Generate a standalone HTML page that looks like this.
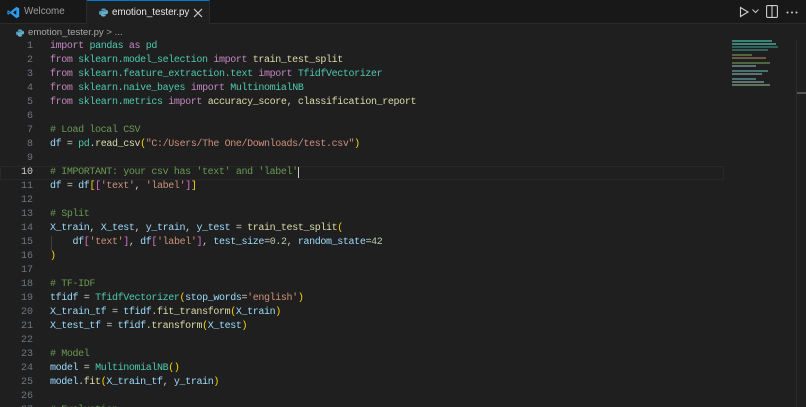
<!DOCTYPE html>
<html><head><meta charset="utf-8"><style>
*{margin:0;padding:0;box-sizing:border-box}
html,body{width:806px;height:407px;overflow:hidden}
body{background:#1f1f1f;font-family:"Liberation Sans",sans-serif;position:relative}
.tabs{position:absolute;left:0;top:0;width:806px;height:24px;background:#181818;border-bottom:1px solid #2b2b2b}
.tab{position:absolute;top:0;height:24px;font-size:9.8px;line-height:24px;color:#9d9d9d}
.t1{left:0;width:87px;padding-left:24px;border-right:1px solid #2b2b2b}
.t2{left:87px;width:123px;background:#1f1f1f;color:#e8e8e8;padding-left:25px;height:25px;border-right:1px solid #2b2b2b;border-top:1px solid #0078d4}
.crumb{position:absolute;left:28px;top:26px;font-size:9.6px;color:#a9a9a9;line-height:14px}
.code{position:absolute;left:0;top:40px;font-family:"Liberation Mono",monospace;font-size:10px;letter-spacing:-0.37px;line-height:14px;white-space:pre}
.ln{position:absolute;left:0;width:33px;text-align:right;color:#6e7681;letter-spacing:0}
.tx{position:absolute;left:50px;color:#cccccc}
.k{color:#c586c0}.m{color:#4ec9b0}.f{color:#dcdcaa}.v{color:#9cdcfe}.s{color:#ce9178}.c{color:#6a9955}.n{color:#b5cea8}.y{color:#ffd700}.p{color:#da70d6}.o{color:#d4d4d4}
.cur{position:absolute;left:0;top:166px;width:724px;height:14px;border:1px solid #282828}
</style></head><body>
<div class="tabs">
<div class="tab t1"><svg style="position:absolute;left:7px;top:6px" width="13" height="13" viewBox="0 0 16 16"><path d="M11.5 1 L15 2.7 V13.3 L11.5 15 L4 8.7 L1.5 10.7 L0.5 10 V6 L1.5 5.3 L4 7.3 Z M11.5 4.8 L7.3 8 L11.5 11.2 Z M1.8 6.7 V9.3 L3.2 8 Z" fill="#2c9ef0"/></svg>Welcome</div>
<div class="tab t2"><svg style="position:absolute;left:12px;top:7px" width="9" height="9" viewBox="0 0 10 10"><path d="M5 0.5 C2.5 0.5 2.6 1.6 2.6 1.6 V2.8 H5.1 V3.2 H1.6 C1.6 3.2 0 3 0 5.4 C0 7.8 1.4 7.7 1.4 7.7 H2.3 V6.6 C2.3 6.6 2.2 5.2 3.7 5.2 H6.2 C6.2 5.2 7.6 5.2 7.6 3.8 V1.7 C7.6 1.7 7.8 0.5 5 0.5Z" fill="#519aba"/><path d="M5 9.5 C7.5 9.5 7.4 8.4 7.4 8.4 V7.2 H4.9 V6.8 H8.4 C8.4 6.8 10 7 10 4.6 C10 2.2 8.6 2.3 8.6 2.3 H7.7 V3.4 C7.7 3.4 7.8 4.8 6.3 4.8 H3.8 C3.8 4.8 2.4 4.8 2.4 6.2 V8.3 C2.4 8.3 2.2 9.5 5 9.5Z" fill="#6cb3d1"/></svg>emotion_tester.py<svg style="position:absolute;left:106px;top:7px" width="10" height="10" viewBox="0 0 10 10"><path d="M1 1 L9 9 M9 1 L1 9" stroke="#ccc" stroke-width="1.2"/></svg></div>
<svg style="position:absolute;left:738px;top:6px" width="12" height="12" viewBox="0 0 12 12"><path d="M2.5 1.5 L10 6 L2.5 10.5 Z" fill="none" stroke="#ccc" stroke-width="1.1"/></svg>
<svg style="position:absolute;left:752px;top:9px" width="7" height="5" viewBox="0 0 7 5"><path d="M0.5 0.5 L3.5 3.5 L6.5 0.5" fill="none" stroke="#ccc" stroke-width="1"/></svg>
<svg style="position:absolute;left:766px;top:5px" width="12" height="13" viewBox="0 0 12 13"><rect x="0.6" y="0.6" width="10.8" height="11.8" rx="1" fill="none" stroke="#ccc" stroke-width="1.1"/><path d="M6 0.6 V12.4" stroke="#ccc" stroke-width="1.1"/></svg>
<svg style="position:absolute;left:786px;top:11px" width="12" height="3" viewBox="0 0 12 3"><circle cx="1.5" cy="1.5" r="1" fill="#ccc"/><circle cx="6" cy="1.5" r="1" fill="#ccc"/><circle cx="10.5" cy="1.5" r="1" fill="#ccc"/></svg>
</div>
<div class="crumb"><svg style="position:absolute;left:-12px;top:3px" width="8" height="8" viewBox="0 0 10 10"><path d="M5 0.5 C2.5 0.5 2.6 1.6 2.6 1.6 V2.8 H5.1 V3.2 H1.6 C1.6 3.2 0 3 0 5.4 C0 7.8 1.4 7.7 1.4 7.7 H2.3 V6.6 C2.3 6.6 2.2 5.2 3.7 5.2 H6.2 C6.2 5.2 7.6 5.2 7.6 3.8 V1.7 C7.6 1.7 7.8 0.5 5 0.5Z" fill="#519aba"/><path d="M5 9.5 C7.5 9.5 7.4 8.4 7.4 8.4 V7.2 H4.9 V6.8 H8.4 C8.4 6.8 10 7 10 4.6 C10 2.2 8.6 2.3 8.6 2.3 H7.7 V3.4 C7.7 3.4 7.8 4.8 6.3 4.8 H3.8 C3.8 4.8 2.4 4.8 2.4 6.2 V8.3 C2.4 8.3 2.2 9.5 5 9.5Z" fill="#6cb3d1"/></svg>emotion_tester.py &gt; ...</div>
<div class="cur"></div>
<div style="position:absolute;left:796px;top:40px;width:1px;height:367px;background:#2b2b2b"></div>
<div style="position:absolute;left:797px;top:92px;width:9px;height:2px;background:#555"></div>
<div style="position:absolute;left:732px;top:40px;width:50px;height:46px;opacity:.6">
<div style="height:2px;width:40px;background:#4ec9b0;margin-bottom:1px"></div>
<div style="height:2px;width:44px;background:#4ec9b0;margin-bottom:1px"></div>
<div style="height:2px;width:46px;background:#3e8c80;margin-bottom:1px"></div>
<div style="height:2px;width:36px;background:#3e8c80;margin-bottom:3px"></div>
<div style="height:2px;width:20px;background:#6a9955;margin-bottom:1px"></div>
<div style="height:2px;width:34px;background:#aa7a60;margin-bottom:3px"></div>
<div style="height:2px;width:38px;background:#6a9955;margin-bottom:1px"></div>
<div style="height:2px;width:24px;background:#8aa;margin-bottom:3px"></div>
<div style="height:2px;width:36px;background:#6aa;margin-bottom:1px"></div>
<div style="height:2px;width:30px;background:#8aa;margin-bottom:3px"></div>
<div style="height:2px;width:24px;background:#6aa;margin-bottom:1px"></div>
<div style="height:2px;width:32px;background:#8aa;margin-bottom:1px"></div>
<div style="height:2px;width:38px;background:#8a8"></div>
</div>
<div class="code">
<div class="ln" style="top:0">1</div><div class="tx" style="top:0"><span class="k">import</span> <span class="m">pandas</span> <span class="k">as</span> <span class="m">pd</span></div>
<div class="ln" style="top:14px">2</div><div class="tx" style="top:14px"><span class="k">from</span> <span class="m">sklearn.model_selection</span> <span class="k">import</span> <span class="f">train_test_split</span></div>
<div class="ln" style="top:28px">3</div><div class="tx" style="top:28px"><span class="k">from</span> <span class="m">sklearn.feature_extraction.text</span> <span class="k">import</span> <span class="m">TfidfVectorizer</span></div>
<div class="ln" style="top:42px">4</div><div class="tx" style="top:42px"><span class="k">from</span> <span class="m">sklearn.naive_bayes</span> <span class="k">import</span> <span class="m">MultinomialNB</span></div>
<div class="ln" style="top:56px">5</div><div class="tx" style="top:56px"><span class="k">from</span> <span class="m">sklearn.metrics</span> <span class="k">import</span> <span class="f">accuracy_score</span>, <span class="f">classification_report</span></div>
<div class="ln" style="top:70px">6</div>
<div class="ln" style="top:84px">7</div><div class="tx c" style="top:84px"># Load local CSV</div>
<div class="ln" style="top:98px">8</div><div class="tx" style="top:98px"><span class="v">df</span> = <span class="m">pd</span>.<span class="f">read_csv</span><span class="y">(</span><span class="s">"C:/Users/The One/Downloads/test.csv"</span><span class="y">)</span></div>
<div class="ln" style="top:112px">9</div>
<div class="ln" style="top:126px;color:#ccc">10</div><div class="tx c" style="top:126px"># IMPORTANT: your csv has 'text' and 'label'<span style="border-left:1px solid #ccc"></span></div>
<div class="ln" style="top:140px">11</div><div class="tx" style="top:140px"><span class="v">df</span> = <span class="v">df</span><span class="y">[</span><span class="p">[</span><span class="s">'text'</span>, <span class="s">'label'</span><span class="p">]</span><span class="y">]</span></div>
<div class="ln" style="top:154px">12</div>
<div class="ln" style="top:168px">13</div><div class="tx c" style="top:168px"># Split</div>
<div class="ln" style="top:182px">14</div><div class="tx" style="top:182px"><span class="v">X_train</span>, <span class="v">X_test</span>, <span class="v">y_train</span>, <span class="v">y_test</span> = <span class="f">train_test_split</span><span class="y">(</span></div>
<div class="ln" style="top:196px">15</div><div class="tx" style="top:196px">    <span class="v">df</span><span class="p">[</span><span class="s">'text'</span><span class="p">]</span>, <span class="v">df</span><span class="p">[</span><span class="s">'label'</span><span class="p">]</span>, <span class="v">test_size</span>=<span class="n">0.2</span>, <span class="v">random_state</span>=<span class="n">42</span></div>
<div class="ln" style="top:210px">16</div><div class="tx y" style="top:210px">)</div>
<div class="ln" style="top:224px">17</div>
<div class="ln" style="top:238px">18</div><div class="tx c" style="top:238px"># TF-IDF</div>
<div class="ln" style="top:252px">19</div><div class="tx" style="top:252px"><span class="v">tfidf</span> = <span class="m">TfidfVectorizer</span><span class="y">(</span><span class="v">stop_words</span>=<span class="s">'english'</span><span class="y">)</span></div>
<div class="ln" style="top:266px">20</div><div class="tx" style="top:266px"><span class="v">X_train_tf</span> = <span class="v">tfidf</span>.<span class="f">fit_transform</span><span class="y">(</span><span class="v">X_train</span><span class="y">)</span></div>
<div class="ln" style="top:280px">21</div><div class="tx" style="top:280px"><span class="v">X_test_tf</span> = <span class="v">tfidf</span>.<span class="f">transform</span><span class="y">(</span><span class="v">X_test</span><span class="y">)</span></div>
<div class="ln" style="top:294px">22</div>
<div class="ln" style="top:308px">23</div><div class="tx c" style="top:308px"># Model</div>
<div class="ln" style="top:322px">24</div><div class="tx" style="top:322px"><span class="v">model</span> = <span class="m">MultinomialNB</span><span class="y">()</span></div>
<div class="ln" style="top:336px">25</div><div class="tx" style="top:336px"><span class="v">model</span>.<span class="f">fit</span><span class="y">(</span><span class="v">X_train_tf</span>, <span class="v">y_train</span><span class="y">)</span></div>
<div class="ln" style="top:350px">26</div>
<div class="ln" style="top:364px">27</div><div class="tx c" style="top:364px"># Evaluation</div>
</div>
<div style="position:absolute;left:51px;top:236px;width:1px;height:14px;background:#404040"></div>
</body></html>
